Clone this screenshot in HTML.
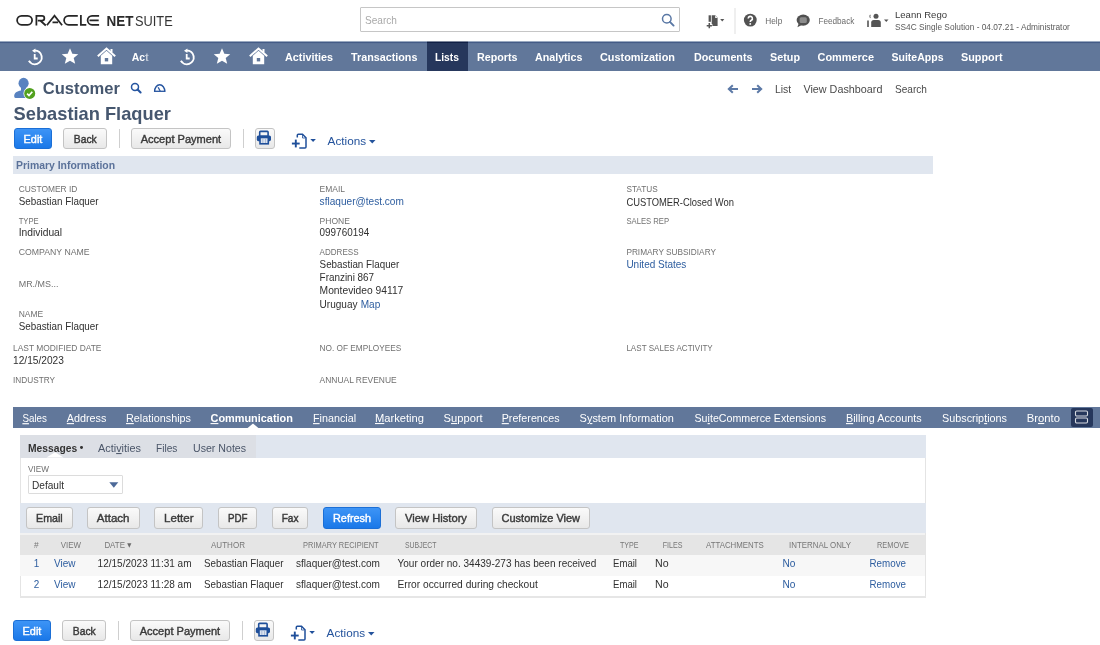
<!DOCTYPE html>
<html><head><meta charset="utf-8"><title>Customer - Sebastian Flaquer</title>
<style>
html,body{margin:0;padding:0;}
body{width:1100px;height:645px;overflow:hidden;position:relative;background:#fff;font-family:"Liberation Sans",sans-serif;}
#wrap{position:absolute;left:0;top:0;width:1100px;height:645px;filter:blur(0.4px);}
.t{position:absolute;white-space:nowrap;line-height:1;}
.b{position:absolute;box-sizing:border-box;}
.btn{position:absolute;box-sizing:border-box;border:1px solid #c4c4c4;border-radius:3px;background:linear-gradient(#fafafa,#e8e8e8);}
.btnb{position:absolute;box-sizing:border-box;border:1px solid #1b6fd6;border-radius:3px;background:linear-gradient(#3d94f6,#1a78e8);}
.sep{position:absolute;width:1px;background:#cfcfcf;}
svg{position:absolute;overflow:visible;}
u{text-decoration:underline;text-underline-offset:1px;text-decoration-thickness:1px;}
</style></head><body>
<div id="wrap"><!-- header -->
<svg style="left:14px;top:10px" width="90" height="20" viewBox="0 0 90 20"><g fill="none" stroke="#262626" stroke-width="1.75">
<path d="M7.7 5.8h5.9a4.5 4.5 0 0 1 0 9h-6a4.5 4.5 0 0 1 0-9z"/>
<path d="M22.4 15.5V5.8h5.6a2.35 2.35 0 0 1 0 4.7h-4.2M26.2 10.5l5.6 5"/>
<path d="M32.9 15.3L40.5 5.6l7.6 9.7M38.5 12.4h5.6"/>
<path d="M63.8 5.8h-9.2a4.5 4.5 0 0 0 0 9h9.2"/>
<path d="M66.9 5.1v9.7h5.4"/>
<path d="M85.1 5.8h-7a4.5 4.5 0 0 0 0 9h7M75.5 10.3h9.2"/>
</g></svg>
<div class="b" style="left:360px;top:7px;width:320px;height:25px;border:1px solid #c6c6c6;border-radius:1px;"></div>
<svg style="left:661px;top:13px" width="14" height="14" viewBox="0 0 14 14"><circle cx="5.8" cy="5.8" r="4.3" fill="none" stroke="#5a78a5" stroke-width="1.5"/><line x1="8.9" y1="8.9" x2="12.6" y2="12.6" stroke="#5a78a5" stroke-width="1.9" stroke-linecap="round"/></svg>
<!-- doc plus icon -->
<svg style="left:700px;top:8px" width="30" height="26" viewBox="0 0 30 26">
<rect x="8.6" y="7.3" width="2.3" height="6.5" fill="#555"/>
<path d="M11.7 7.3h3.5l2.4 2.4v8.3h-5.9z" fill="#555"/>
<path d="M15.2 7.6v2.3h2.3z" fill="#fff"/>
<path d="M9.3 14.6v6.2M6.2 17.7h6.2" stroke="#fff" stroke-width="3.2"/>
<path d="M9.3 15.1v5.2M6.7 17.7h5.2" stroke="#555" stroke-width="1.5"/>
<path d="M20.2 10.9h4.1l-2.05 2.6z" fill="#555"/>
</svg>
<div class="sep" style="left:734px;top:8px;height:26px;width:2px;background:#efefef"></div>
<svg style="left:743px;top:13px" width="15" height="15" viewBox="0 0 15 15"><circle cx="7.3" cy="7.1" r="6.4" fill="#525252"/><path d="M5.2 5.5a2.1 2.1 0 1 1 3.1 1.8c-0.8 0.45-1.05 0.8-1.05 1.7" fill="none" stroke="#fff" stroke-width="1.6"/><circle cx="7.25" cy="10.9" r="0.95" fill="#fff"/></svg>
<svg style="left:796px;top:14px" width="15" height="14" viewBox="0 0 15 14"><ellipse cx="7.2" cy="6.1" rx="6.6" ry="5.6" fill="#505050"/><path d="M2.6 9.8L1.4 13.2l4.4-2.2z" fill="#505050"/><rect x="3.6" y="3.3" width="7.2" height="5.6" rx="1.5" fill="#8c8c8c"/></svg>
<svg style="left:866px;top:13px" width="24" height="16" viewBox="0 0 24 16"><circle cx="10" cy="3.2" r="2.5" fill="#555"/><path d="M5.2 14v-4.4q0-2.6 2.6-2.6h4.4q2.6 0 2.6 2.6V14z" fill="#555"/><rect x="1" y="7.5" width="2" height="6.5" fill="#777"/><path d="M4.5 1.8a2 2 0 0 0 0 3" fill="none" stroke="#777" stroke-width="1.1"/><path d="M18 6.5h4.5l-2.25 2.6z" fill="#555"/></svg>
<!-- nav -->
<div class="b" style="left:0;top:41px;width:1100px;height:30px;background:linear-gradient(#9aa9c0 0,#9aa9c0 1px,#445b86 1px,#445b86 2px,#5a7096 2px,#61779a 3px);"></div>
<div class="b" style="left:427px;top:41px;width:41px;height:30px;background:linear-gradient(#7d879c 0,#7d879c 1px,#0f1f45 1px,#0f1f45 2px,#26375c 2px);"></div>
<!-- nav icons -->
<svg style="left:25.5px;top:49px" width="17" height="17" viewBox="0 0 17 17"><path d="M8.8 1.5A6.9 6.9 0 1 1 2.85 11.85" fill="none" stroke="#fff" stroke-width="1.9"/><path d="M6 1.7l3.4-2.3v4.6z" fill="#fff"/><path d="M8.7 4.9v4.6h3" fill="none" stroke="#fff" stroke-width="1.8"/></svg>
<svg style="left:61px;top:48px" width="18" height="17" viewBox="0 0 17 16"><path d="M8.5 0.3l2.2 5.1 5.6 0.4-4.3 3.6 1.4 5.5-4.9-3-4.9 3 1.4-5.5-4.3-3.6 5.6-0.4z" fill="#fff"/></svg>
<svg style="left:97px;top:47px" width="19" height="18" viewBox="0 0 19 18"><path d="M0.8 9.3L9.5 1.5l8.7 7.8" fill="none" stroke="#fff" stroke-width="2"/><path d="M3.8 8.8L9.5 3.8l5.7 5v8.4H3.8z" fill="#fff"/><rect x="7.8" y="11" width="3.4" height="3.4" fill="#61779a"/><rect x="13.5" y="2" width="2" height="3.5" fill="#fff"/></svg>
<svg style="left:177.5px;top:49px" width="17" height="17" viewBox="0 0 17 17"><path d="M8.8 1.5A6.9 6.9 0 1 1 2.85 11.85" fill="none" stroke="#fff" stroke-width="1.9"/><path d="M6 1.7l3.4-2.3v4.6z" fill="#fff"/><path d="M8.7 4.9v4.6h3" fill="none" stroke="#fff" stroke-width="1.8"/></svg>
<svg style="left:213px;top:48px" width="18" height="17" viewBox="0 0 17 16"><path d="M8.5 0.3l2.2 5.1 5.6 0.4-4.3 3.6 1.4 5.5-4.9-3-4.9 3 1.4-5.5-4.3-3.6 5.6-0.4z" fill="#fff"/></svg>
<svg style="left:249px;top:47px" width="19" height="18" viewBox="0 0 19 18"><path d="M0.8 9.3L9.5 1.5l8.7 7.8" fill="none" stroke="#fff" stroke-width="2"/><path d="M3.8 8.8L9.5 3.8l5.7 5v8.4H3.8z" fill="#fff"/><rect x="7.8" y="11" width="3.4" height="3.4" fill="#61779a"/><rect x="13.5" y="2" width="2" height="3.5" fill="#fff"/></svg>
<!-- title icons -->
<svg style="left:13px;top:77px" width="24" height="24" viewBox="0 0 24 24"><ellipse cx="10.6" cy="6.2" rx="5.1" ry="5.4" fill="#5882c0"/><path d="M8 10h5v4h-5z" fill="#5882c0"/><path d="M1.2 19.2C1.2 15.8 4 14.2 8 13.6h5.5c2.5 0.6 4.5 1.5 4.5 6v1.3H2.5q-1.3 0-1.3-1.7z" fill="#5882c0"/><circle cx="16.7" cy="16.4" r="6.2" fill="#fff"/><circle cx="16.7" cy="16.4" r="5.5" fill="#52a11f"/><path d="M14.1 16.6l1.9 1.9 3.3-3.7" fill="none" stroke="#fff" stroke-width="1.7"/></svg>
<svg style="left:130px;top:82px" width="12" height="12" viewBox="0 0 12 12"><circle cx="5" cy="4.9" r="3.5" fill="none" stroke="#2655a0" stroke-width="1.5"/><line x1="7.6" y1="7.5" x2="10.6" y2="10.5" stroke="#2655a0" stroke-width="2" stroke-linecap="round"/></svg>
<svg style="left:153px;top:83px" width="14" height="10" viewBox="0 0 14 10"><path d="M1.6 8.4A5.1 6.6 0 0 1 11.8 8.4" fill="none" stroke="#2655a0" stroke-width="1.4"/><line x1="1" y1="8.3" x2="12.4" y2="8.3" stroke="#2655a0" stroke-width="1.3"/><line x1="7.2" y1="8" x2="5.1" y2="4.3" stroke="#2655a0" stroke-width="1.3"/></svg>
<!-- nav arrows right -->
<svg style="left:727px;top:84px" width="12" height="10" viewBox="0 0 12 10"><path d="M11 5H2.5M5.8 1.2L1.8 5l4 3.8" fill="none" stroke="#5c79a6" stroke-width="2"/></svg>
<svg style="left:751px;top:84px" width="12" height="10" viewBox="0 0 12 10"><path d="M1 5h8.5M6.2 1.2l4 3.8-4 3.8" fill="none" stroke="#5c79a6" stroke-width="2"/></svg>
<!-- primary info -->
<div class="b" style="left:13px;top:156px;width:920px;height:18px;background:#e0e6ef;"></div>
<!-- tabs bar -->
<div class="b" style="left:13px;top:407px;width:1087px;height:21px;background:#61779a;"></div>
<svg style="left:246px;top:423px" width="14" height="6" viewBox="0 0 14 6"><path d="M1 5.5L7 0.5l6 5z" fill="#fff"/></svg>
<div class="b" style="left:1071px;top:408px;width:22px;height:19px;background:#26375c;border-radius:2px;"></div>
<svg style="left:1074px;top:410px" width="15" height="14" viewBox="0 0 15 14"><rect x="1.5" y="1" width="12" height="5" rx="1.2" fill="none" stroke="#d5d9e1" stroke-width="1.1"/><rect x="1.5" y="8" width="12" height="5" rx="1.2" fill="none" stroke="#d5d9e1" stroke-width="1.1"/></svg>
<!-- content panel -->
<div class="b" style="left:20px;top:435px;width:906px;height:163px;border:1px solid #e4e4e4;border-top:none;"></div>
<div class="b" style="left:20px;top:435px;width:906px;height:22.5px;background:#e0e6ef;"></div>
<div class="b" style="left:20px;top:435px;width:236px;height:22.5px;background:#dcdfe5;"></div>
<svg style="left:46px;top:452px" width="18" height="6" viewBox="0 0 18 6"><path d="M0.5 5.5L9 0.3l8.5 5.2z" fill="#fff"/></svg>
<div class="b" style="left:80.3px;top:445.8px;width:2.8px;height:2.8px;border-radius:50%;background:#333;"></div>
<!-- select -->
<div class="b" style="left:28px;top:475px;width:95px;height:19px;border:1px solid #dcdcdc;border-radius:1px;"></div>
<svg style="left:109px;top:481.5px" width="10" height="6" viewBox="0 0 10 6"><path d="M0.3 0.3h9l-4.5 5.4z" fill="#4d6a99"/></svg>
<!-- button bar -->
<div class="b" style="left:20px;top:503px;width:906px;height:30px;background:#e0e6ef;"></div>
<div class="btn" style="left:26px;top:507px;width:47px;height:22px;"></div>
<div class="btn" style="left:87px;top:507px;width:53px;height:22px;"></div>
<div class="btn" style="left:154px;top:507px;width:49px;height:22px;"></div>
<div class="btn" style="left:218px;top:507px;width:39px;height:22px;"></div>
<div class="btn" style="left:272px;top:507px;width:36px;height:22px;"></div>
<div class="btnb" style="left:323px;top:507px;width:58px;height:22px;"></div>
<div class="btn" style="left:395px;top:507px;width:82px;height:22px;"></div>
<div class="btn" style="left:492px;top:507px;width:98px;height:22px;"></div>
<!-- table -->
<div class="b" style="left:20px;top:533px;width:905px;height:1.5px;background:#f2f2f2;"></div>
<div class="b" style="left:20px;top:534.5px;width:905px;height:20px;background:#e5e5e5;"></div>
<div class="b" style="left:20px;top:554.5px;width:905px;height:21px;background:#f7f7f7;"></div>
<div class="b" style="left:20px;top:596px;width:906px;height:2px;background:#e6e6e6;"></div>
<svg style="left:127.2px;top:542.8px" width="5" height="5" viewBox="0 0 5 5"><path d="M0.2 0.3h4.2l-2.1 4.4z" fill="#6a6a6a"/></svg>
<div class="btnb" style="left:14px;top:128px;width:38px;height:21px;"></div>
<div class="btn" style="left:63px;top:128px;width:44px;height:21px;"></div>
<div class="sep" style="left:119px;top:129px;height:19px;"></div>
<div class="btn" style="left:131px;top:128px;width:100px;height:21px;"></div>
<div class="sep" style="left:243px;top:129px;height:19px;"></div>
<div class="btn" style="left:255px;top:128px;width:20px;height:21px;"></div>
<svg style="left:255px;top:129px" width="20" height="18" viewBox="0 0 20 18"><rect x="4.7" y="2.4" width="8.4" height="5" rx="0.8" fill="none" stroke="#1f4f9a" stroke-width="1.6"/><rect x="1.8" y="6.4" width="14.2" height="5.8" rx="1.6" fill="#1f4f9a"/><rect x="5" y="8.5" width="8.3" height="6.3" fill="#dbe3ef" stroke="#1f4f9a" stroke-width="1.6"/><path d="M7.8 9.5v4.5M10.5 9.5v4.5" stroke="#9fb2cf" stroke-width="0.8"/></svg>
<svg style="left:290px;top:133px" width="28" height="17" viewBox="0 0 28 17"><path d="M7.3 4.5V2.2q0-1 1-1h4.2l3.5 3.5v9.3q0 1-1 1H9.3" fill="none" stroke="#1f4f9a" stroke-width="1.5"/><path d="M12.5 2v3h2.8" fill="none" stroke="#1f4f9a" stroke-width="0.8"/><rect x="1.9" y="9.6" width="7.8" height="1.9" fill="#1f4f9a"/><rect x="4.85" y="6.6" width="1.9" height="7.8" fill="#1f4f9a"/><path d="M20.3 6h5.6l-2.8 3z" fill="#1f4f9a"/></svg>
<svg style="left:369px;top:140px" width="7" height="4" viewBox="0 0 7 4"><path d="M0 0h6.5l-3.25 3.5z" fill="#24539c"/></svg><div class="btnb" style="left:13px;top:620px;width:38px;height:21px;"></div>
<div class="btn" style="left:62px;top:620px;width:44px;height:21px;"></div>
<div class="sep" style="left:118px;top:621px;height:19px;"></div>
<div class="btn" style="left:130px;top:620px;width:100px;height:21px;"></div>
<div class="sep" style="left:242px;top:621px;height:19px;"></div>
<div class="btn" style="left:254px;top:620px;width:20px;height:21px;"></div>
<svg style="left:254px;top:621px" width="20" height="18" viewBox="0 0 20 18"><rect x="4.7" y="2.4" width="8.4" height="5" rx="0.8" fill="none" stroke="#1f4f9a" stroke-width="1.6"/><rect x="1.8" y="6.4" width="14.2" height="5.8" rx="1.6" fill="#1f4f9a"/><rect x="5" y="8.5" width="8.3" height="6.3" fill="#dbe3ef" stroke="#1f4f9a" stroke-width="1.6"/><path d="M7.8 9.5v4.5M10.5 9.5v4.5" stroke="#9fb2cf" stroke-width="0.8"/></svg>
<svg style="left:289px;top:625px" width="28" height="17" viewBox="0 0 28 17"><path d="M7.3 4.5V2.2q0-1 1-1h4.2l3.5 3.5v9.3q0 1-1 1H9.3" fill="none" stroke="#1f4f9a" stroke-width="1.5"/><path d="M12.5 2v3h2.8" fill="none" stroke="#1f4f9a" stroke-width="0.8"/><rect x="1.9" y="9.6" width="7.8" height="1.9" fill="#1f4f9a"/><rect x="4.85" y="6.6" width="1.9" height="7.8" fill="#1f4f9a"/><path d="M20.3 6h5.6l-2.8 3z" fill="#1f4f9a"/></svg>
<svg style="left:368px;top:632px" width="7" height="4" viewBox="0 0 7 4"><path d="M0 0h6.5l-3.25 3.5z" fill="#24539c"/></svg><div class="t" style="left:106.50px;top:14.52px;font-size:13.50px;font-weight:700;color:#2b2b2b;transform:scaleY(1.033);transform-origin:0 11.43px;">NET</div>
<div class="t" style="left:135.00px;top:15.58px;font-size:12.80px;font-weight:400;color:#333333;transform:scaleY(1.090);transform-origin:0 10.84px;">SUITE</div>
<div class="t" style="left:365.00px;top:15.96px;font-size:10.10px;font-weight:400;color:#a9a9a9;transform:scaleY(1.105);transform-origin:0 8.55px;">Search</div>
<div class="t" style="left:765.30px;top:18.36px;font-size:8.27px;font-weight:400;color:#6a6a6a;transform:scaleY(1.147);transform-origin:0 7.00px;">Help</div>
<div class="t" style="left:818.40px;top:18.35px;font-size:8.20px;font-weight:400;color:#6a6a6a;transform:scaleY(1.157);transform-origin:0 6.94px;">Feedback</div>
<div class="t" style="left:895.00px;top:10.00px;font-size:9.56px;font-weight:400;color:#3a3a3a;transform:scaleY(1.022);transform-origin:0 8.09px;">Leann Rego</div>
<div class="t" style="left:895.00px;top:22.60px;font-size:8.31px;font-weight:400;color:#5a5a5a;transform:scaleY(1.008);transform-origin:0 7.03px;">SS4C Single Solution - 04.07.21 - Administrator</div>
<div class="t" style="left:131.75px;top:52.82px;font-size:10.47px;font-weight:700;color:#ffffff;transform:scaleY(1.067);transform-origin:0 8.86px;-webkit-mask-image:linear-gradient(to right,#000 0,#000 12px,rgba(0,0,0,0.25) 18px);">Act</div>
<div class="t" style="left:285.00px;top:51.76px;font-size:10.80px;font-weight:700;color:#ffffff;transform:scaleY(1.034);transform-origin:0 9.14px;">Activities</div>
<div class="t" style="left:351.00px;top:51.77px;font-size:10.78px;font-weight:700;color:#ffffff;transform:scaleY(1.035);transform-origin:0 9.13px;">Transactions</div>
<div class="t" style="left:435.00px;top:52.81px;font-size:10.28px;font-weight:700;color:#ffffff;transform:scaleY(1.086);transform-origin:0 8.70px;">Lists</div>
<div class="t" style="left:477.00px;top:51.76px;font-size:10.72px;font-weight:700;color:#ffffff;transform:scaleY(1.041);transform-origin:0 9.07px;">Reports</div>
<div class="t" style="left:535.00px;top:51.76px;font-size:10.68px;font-weight:700;color:#ffffff;transform:scaleY(1.045);transform-origin:0 9.04px;">Analytics</div>
<div class="t" style="left:600.00px;top:51.77px;font-size:10.89px;font-weight:700;color:#ffffff;transform:scaleY(1.025);transform-origin:0 9.22px;">Customization</div>
<div class="t" style="left:694.00px;top:51.75px;font-size:10.74px;font-weight:700;color:#ffffff;transform:scaleY(1.039);transform-origin:0 9.09px;">Documents</div>
<div class="t" style="left:770.00px;top:51.75px;font-size:10.80px;font-weight:700;color:#ffffff;transform:scaleY(1.034);transform-origin:0 9.14px;">Setup</div>
<div class="t" style="left:817.50px;top:51.75px;font-size:10.93px;font-weight:700;color:#ffffff;transform:scaleY(1.021);transform-origin:0 9.25px;">Commerce</div>
<div class="t" style="left:891.50px;top:51.75px;font-size:10.52px;font-weight:700;color:#ffffff;transform:scaleY(1.061);transform-origin:0 8.90px;">SuiteApps</div>
<div class="t" style="left:961.00px;top:51.76px;font-size:10.83px;font-weight:700;color:#ffffff;transform:scaleY(1.031);transform-origin:0 9.17px;">Support</div>
<div class="t" style="left:42.70px;top:80.51px;font-size:16.56px;font-weight:700;color:#46576f;">Customer</div>
<div class="t" style="left:13.60px;top:105.01px;font-size:18.28px;font-weight:700;color:#46576f;">Sebastian Flaquer</div>
<div class="t" style="left:775.00px;top:84.77px;font-size:10.41px;font-weight:400;color:#4a4a4a;transform:scaleY(1.072);transform-origin:0 8.81px;">List</div>
<div class="t" style="left:803.40px;top:83.72px;font-size:10.80px;font-weight:400;color:#4a4a4a;transform:scaleY(1.034);transform-origin:0 9.14px;">View Dashboard</div>
<div class="t" style="left:895.00px;top:84.77px;font-size:10.10px;font-weight:400;color:#4a4a4a;transform:scaleY(1.105);transform-origin:0 8.55px;">Search</div>
<div class="t" style="left:23.60px;top:133.91px;font-size:10.91px;font-weight:400;color:#ffffff;-webkit-text-stroke:0.4px currentColor;">Edit</div>
<div class="t" style="left:73.80px;top:134.95px;font-size:10.35px;font-weight:400;color:#3a3a3a;transform:scaleY(1.051);transform-origin:0 8.76px;-webkit-text-stroke:0.4px currentColor;">Back</div>
<div class="t" style="left:140.70px;top:133.92px;font-size:11.06px;font-weight:400;color:#3a3a3a;-webkit-text-stroke:0.4px currentColor;">Accept Payment</div>
<div class="t" style="left:327.60px;top:135.41px;font-size:11.72px;font-weight:400;color:#24539c;">Actions</div>
<div class="t" style="left:22.60px;top:625.91px;font-size:10.91px;font-weight:400;color:#ffffff;-webkit-text-stroke:0.4px currentColor;">Edit</div>
<div class="t" style="left:72.80px;top:626.95px;font-size:10.35px;font-weight:400;color:#3a3a3a;transform:scaleY(1.051);transform-origin:0 8.76px;-webkit-text-stroke:0.4px currentColor;">Back</div>
<div class="t" style="left:139.70px;top:625.92px;font-size:11.06px;font-weight:400;color:#3a3a3a;-webkit-text-stroke:0.4px currentColor;">Accept Payment</div>
<div class="t" style="left:326.60px;top:627.41px;font-size:11.72px;font-weight:400;color:#24539c;">Actions</div>
<div class="t" style="left:16.00px;top:160.75px;font-size:10.43px;font-weight:700;color:#5b729a;transform:scaleY(1.044);transform-origin:0 8.83px;">Primary Information</div>
<div class="t" style="left:18.70px;top:184.83px;font-size:8.41px;font-weight:400;color:#707070;transform:scaleY(1.162);transform-origin:0 7.12px;">CUSTOMER ID</div>
<div class="t" style="left:18.70px;top:196.94px;font-size:9.86px;font-weight:400;color:#303030;transform:scaleY(1.076);transform-origin:0 8.34px;">Sebastian Flaquer</div>
<div class="t" style="left:18.70px;top:217.69px;font-size:7.67px;font-weight:400;color:#707070;transform:scaleY(1.180);transform-origin:0 6.49px;">TYPE</div>
<div class="t" style="left:18.70px;top:228.42px;font-size:10.29px;font-weight:400;color:#303030;transform:scaleY(1.030);transform-origin:0 8.71px;">Individual</div>
<div class="t" style="left:18.70px;top:247.75px;font-size:8.72px;font-weight:400;color:#707070;transform:scaleY(1.120);transform-origin:0 7.38px;">COMPANY NAME</div>
<div class="t" style="left:18.70px;top:279.66px;font-size:8.95px;font-weight:400;color:#707070;transform:scaleY(1.092);transform-origin:0 7.57px;">MR./MS...</div>
<div class="t" style="left:18.70px;top:310.04px;font-size:8.50px;font-weight:400;color:#707070;transform:scaleY(1.150);transform-origin:0 7.19px;">NAME</div>
<div class="t" style="left:18.70px;top:321.63px;font-size:9.86px;font-weight:400;color:#303030;transform:scaleY(1.076);transform-origin:0 8.34px;">Sebastian Flaquer</div>
<div class="t" style="left:13.00px;top:344.04px;font-size:8.42px;font-weight:400;color:#707070;transform:scaleY(1.160);transform-origin:0 7.13px;">LAST MODIFIED DATE</div>
<div class="t" style="left:13.00px;top:356.03px;font-size:10.19px;font-weight:400;color:#303030;transform:scaleY(1.041);transform-origin:0 8.62px;">12/15/2023</div>
<div class="t" style="left:13.00px;top:377.19px;font-size:8.26px;font-weight:400;color:#707070;transform:scaleY(1.180);transform-origin:0 6.99px;">INDUSTRY</div>
<div class="t" style="left:319.60px;top:185.04px;font-size:8.48px;font-weight:400;color:#707070;transform:scaleY(1.152);transform-origin:0 7.18px;">EMAIL</div>
<div class="t" style="left:319.60px;top:196.73px;font-size:10.10px;font-weight:400;color:#2d5d9f;transform:scaleY(1.049);transform-origin:0 8.55px;">sflaquer@test.com</div>
<div class="t" style="left:319.60px;top:216.83px;font-size:8.53px;font-weight:400;color:#707070;transform:scaleY(1.145);transform-origin:0 7.22px;">PHONE</div>
<div class="t" style="left:319.60px;top:228.03px;font-size:9.91px;font-weight:400;color:#303030;transform:scaleY(1.070);transform-origin:0 8.39px;">099760194</div>
<div class="t" style="left:319.60px;top:248.96px;font-size:8.06px;font-weight:400;color:#707070;transform:scaleY(1.180);transform-origin:0 6.82px;">ADDRESS</div>
<div class="t" style="left:319.60px;top:259.64px;font-size:9.83px;font-weight:400;color:#303030;transform:scaleY(1.079);transform-origin:0 8.32px;">Sebastian Flaquer</div>
<div class="t" style="left:319.60px;top:272.64px;font-size:9.92px;font-weight:400;color:#303030;transform:scaleY(1.069);transform-origin:0 8.40px;">Franzini 867</div>
<div class="t" style="left:319.60px;top:286.03px;font-size:10.28px;font-weight:400;color:#303030;transform:scaleY(1.032);transform-origin:0 8.70px;">Montevideo 94117</div>
<div class="t" style="left:319.60px;top:299.64px;font-size:10.05px;font-weight:400;color:#303030;transform:scaleY(1.055);transform-origin:0 8.51px;">Uruguay</div>
<div class="t" style="left:360.70px;top:299.62px;font-size:10.07px;font-weight:400;color:#2d5d9f;transform:scaleY(1.053);transform-origin:0 8.52px;">Map</div>
<div class="t" style="left:319.60px;top:345.18px;font-size:8.28px;font-weight:400;color:#707070;transform:scaleY(1.179);transform-origin:0 7.01px;">NO. OF EMPLOYEES</div>
<div class="t" style="left:319.60px;top:376.03px;font-size:8.45px;font-weight:400;color:#707070;transform:scaleY(1.156);transform-origin:0 7.15px;">ANNUAL REVENUE</div>
<div class="t" style="left:626.40px;top:185.99px;font-size:8.26px;font-weight:400;color:#707070;transform:scaleY(1.180);transform-origin:0 6.99px;">STATUS</div>
<div class="t" style="left:626.40px;top:197.50px;font-size:9.39px;font-weight:400;color:#303030;transform:scaleY(1.129);transform-origin:0 7.95px;">CUSTOMER-Closed Won</div>
<div class="t" style="left:626.40px;top:217.70px;font-size:7.70px;font-weight:400;color:#707070;transform:scaleY(1.180);transform-origin:0 6.51px;">SALES REP</div>
<div class="t" style="left:626.40px;top:249.18px;font-size:8.27px;font-weight:400;color:#707070;transform:scaleY(1.180);transform-origin:0 7.00px;">PRIMARY SUBSIDIARY</div>
<div class="t" style="left:626.40px;top:259.73px;font-size:9.99px;font-weight:400;color:#2d5d9f;transform:scaleY(1.061);transform-origin:0 8.46px;">United States</div>
<div class="t" style="left:626.40px;top:344.66px;font-size:8.07px;font-weight:400;color:#707070;transform:scaleY(1.180);transform-origin:0 6.83px;">LAST SALES ACTIVITY</div>
<div class="t" style="left:22.40px;top:414.45px;font-size:9.80px;font-weight:400;color:#ffffff;transform:scaleY(1.180);transform-origin:0 8.29px;"><u>S</u>ales</div>
<div class="t" style="left:66.80px;top:413.42px;font-size:10.80px;font-weight:400;color:#ffffff;transform:scaleY(1.086);transform-origin:0 9.14px;"><u>A</u>ddress</div>
<div class="t" style="left:126.00px;top:413.43px;font-size:10.83px;font-weight:400;color:#ffffff;transform:scaleY(1.082);transform-origin:0 9.17px;"><u>R</u>elationships</div>
<div class="t" style="left:313.00px;top:413.42px;font-size:10.75px;font-weight:400;color:#ffffff;transform:scaleY(1.091);transform-origin:0 9.10px;"><u>F</u>inancial</div>
<div class="t" style="left:375.00px;top:413.44px;font-size:11.16px;font-weight:400;color:#ffffff;transform:scaleY(1.050);transform-origin:0 9.45px;"><u>M</u>arketing</div>
<div class="t" style="left:443.60px;top:413.44px;font-size:11.16px;font-weight:400;color:#ffffff;transform:scaleY(1.050);transform-origin:0 9.45px;">S<u>u</u>pport</div>
<div class="t" style="left:501.70px;top:413.42px;font-size:10.73px;font-weight:400;color:#ffffff;transform:scaleY(1.093);transform-origin:0 9.08px;"><u>P</u>references</div>
<div class="t" style="left:579.60px;top:413.43px;font-size:10.96px;font-weight:400;color:#ffffff;transform:scaleY(1.069);transform-origin:0 9.28px;">S<u>y</u>stem Information</div>
<div class="t" style="left:694.50px;top:413.40px;font-size:10.66px;font-weight:400;color:#ffffff;transform:scaleY(1.099);transform-origin:0 9.02px;">Su<u>i</u>teCommerce Extensions</div>
<div class="t" style="left:846.00px;top:413.41px;font-size:10.81px;font-weight:400;color:#ffffff;transform:scaleY(1.084);transform-origin:0 9.15px;"><u>B</u>illing Accounts</div>
<div class="t" style="left:942.00px;top:413.43px;font-size:10.83px;font-weight:400;color:#ffffff;transform:scaleY(1.082);transform-origin:0 9.17px;">Subscrip<u>t</u>ions</div>
<div class="t" style="left:1026.70px;top:413.42px;font-size:11.30px;font-weight:400;color:#ffffff;transform:scaleY(1.037);transform-origin:0 9.57px;">Br<u>o</u>nto</div>
<div class="t" style="left:210.50px;top:413.43px;font-size:10.92px;font-weight:700;color:#ffffff;transform:scaleY(1.073);transform-origin:0 9.25px;"><u>C</u>ommunication</div>
<div class="t" style="left:28.00px;top:443.85px;font-size:10.30px;font-weight:700;color:#333333;transform:scaleY(1.057);transform-origin:0 8.72px;">Messages</div>
<div class="t" style="left:98.00px;top:442.82px;font-size:10.90px;font-weight:400;color:#4a5568;transform:scaleY(1.049);transform-origin:0 9.23px;">Acti<u>v</u>ities</div>
<div class="t" style="left:156.00px;top:443.88px;font-size:10.10px;font-weight:400;color:#4a5568;transform:scaleY(1.133);transform-origin:0 8.55px;">Files</div>
<div class="t" style="left:193.00px;top:442.81px;font-size:10.61px;font-weight:400;color:#4a5568;transform:scaleY(1.079);transform-origin:0 8.98px;">User Notes</div>
<div class="t" style="left:28.00px;top:465.52px;font-size:8.21px;font-weight:400;color:#707070;transform:scaleY(1.019);transform-origin:0 6.95px;">VIEW</div>
<div class="t" style="left:32.00px;top:480.63px;font-size:10.10px;font-weight:400;color:#303030;transform:scaleY(1.050);transform-origin:0 8.55px;">Default</div>
<div class="t" style="left:36.00px;top:513.31px;font-size:10.69px;font-weight:400;color:#3a3a3a;transform:scaleY(1.019);transform-origin:0 9.05px;-webkit-text-stroke:0.4px currentColor;">Email</div>
<div class="t" style="left:96.80px;top:513.32px;font-size:11.54px;font-weight:400;color:#3a3a3a;-webkit-text-stroke:0.4px currentColor;">Attach</div>
<div class="t" style="left:164.00px;top:513.31px;font-size:11.58px;font-weight:400;color:#3a3a3a;-webkit-text-stroke:0.4px currentColor;">Letter</div>
<div class="t" style="left:228.00px;top:514.34px;font-size:9.80px;font-weight:400;color:#3a3a3a;transform:scaleY(1.110);transform-origin:0 8.30px;-webkit-text-stroke:0.4px currentColor;">PDF</div>
<div class="t" style="left:281.70px;top:514.35px;font-size:10.14px;font-weight:400;color:#3a3a3a;transform:scaleY(1.073);transform-origin:0 8.59px;-webkit-text-stroke:0.4px currentColor;">Fax</div>
<div class="t" style="left:405.00px;top:513.31px;font-size:11.20px;font-weight:400;color:#3a3a3a;-webkit-text-stroke:0.4px currentColor;">View History</div>
<div class="t" style="left:501.60px;top:513.31px;font-size:10.97px;font-weight:400;color:#3a3a3a;-webkit-text-stroke:0.4px currentColor;">Customize View</div>
<div class="t" style="left:333.00px;top:513.30px;font-size:10.86px;font-weight:400;color:#ffffff;-webkit-text-stroke:0.4px currentColor;">Refresh</div>
<div class="t" style="left:34.00px;top:541.42px;font-size:8.37px;font-weight:400;color:#777777;transform:scaleY(1.067);transform-origin:0 7.09px;">#</div>
<div class="t" style="left:60.80px;top:542.49px;font-size:7.91px;font-weight:400;color:#777777;transform:scaleY(1.129);transform-origin:0 6.69px;">VIEW</div>
<div class="t" style="left:104.40px;top:541.51px;font-size:7.95px;font-weight:400;color:#777777;transform:scaleY(1.124);transform-origin:0 6.73px;">DATE</div>
<div class="t" style="left:211.00px;top:542.49px;font-size:8.05px;font-weight:400;color:#777777;transform:scaleY(1.109);transform-origin:0 6.82px;">AUTHOR</div>
<div class="t" style="left:303.00px;top:542.46px;font-size:7.47px;font-weight:400;color:#777777;transform:scaleY(1.180);transform-origin:0 6.32px;">PRIMARY RECIPIENT</div>
<div class="t" style="left:405.00px;top:542.57px;font-size:6.92px;font-weight:400;color:#777777;transform:scaleY(1.180);transform-origin:0 5.86px;">SUBJECT</div>
<div class="t" style="left:620.00px;top:542.60px;font-size:7.12px;font-weight:400;color:#777777;transform:scaleY(1.180);transform-origin:0 6.03px;">TYPE</div>
<div class="t" style="left:662.70px;top:542.59px;font-size:7.13px;font-weight:400;color:#777777;transform:scaleY(1.180);transform-origin:0 6.03px;">FILES</div>
<div class="t" style="left:706.00px;top:541.50px;font-size:7.87px;font-weight:400;color:#777777;transform:scaleY(1.135);transform-origin:0 6.66px;">ATTACHMENTS</div>
<div class="t" style="left:789.00px;top:541.50px;font-size:7.92px;font-weight:400;color:#777777;transform:scaleY(1.128);transform-origin:0 6.70px;">INTERNAL ONLY</div>
<div class="t" style="left:877.00px;top:542.45px;font-size:7.39px;font-weight:400;color:#777777;transform:scaleY(1.180);transform-origin:0 6.25px;">REMOVE</div>
<div class="t" style="left:33.80px;top:558.84px;font-size:9.94px;font-weight:400;color:#2d5d9f;transform:scaleY(1.067);transform-origin:0 8.42px;">1</div>
<div class="t" style="left:54.00px;top:558.83px;font-size:10.00px;font-weight:400;color:#2d5d9f;transform:scaleY(1.060);transform-origin:0 8.47px;">View</div>
<div class="t" style="left:97.60px;top:558.83px;font-size:10.02px;font-weight:400;color:#303030;transform:scaleY(1.058);transform-origin:0 8.48px;">12/15/2023 11:31 am</div>
<div class="t" style="left:204.00px;top:558.82px;font-size:9.81px;font-weight:400;color:#303030;transform:scaleY(1.081);transform-origin:0 8.30px;">Sebastian Flaquer</div>
<div class="t" style="left:296.00px;top:558.83px;font-size:10.06px;font-weight:400;color:#303030;transform:scaleY(1.054);transform-origin:0 8.51px;">sflaquer@test.com</div>
<div class="t" style="left:397.50px;top:558.83px;font-size:10.04px;font-weight:400;color:#303030;transform:scaleY(1.056);transform-origin:0 8.50px;">Your order no. 34439-273 has been received</div>
<div class="t" style="left:613.00px;top:558.82px;font-size:9.60px;font-weight:400;color:#303030;transform:scaleY(1.105);transform-origin:0 8.12px;">Email</div>
<div class="t" style="left:655.00px;top:557.80px;font-size:10.64px;font-weight:400;color:#303030;">No</div>
<div class="t" style="left:782.40px;top:558.83px;font-size:10.17px;font-weight:400;color:#2d5d9f;transform:scaleY(1.043);transform-origin:0 8.61px;">No</div>
<div class="t" style="left:869.50px;top:558.83px;font-size:9.80px;font-weight:400;color:#2d5d9f;transform:scaleY(1.082);transform-origin:0 8.30px;">Remove</div>
<div class="t" style="left:33.80px;top:579.75px;font-size:9.94px;font-weight:400;color:#2d5d9f;transform:scaleY(1.067);transform-origin:0 8.42px;">2</div>
<div class="t" style="left:54.00px;top:579.74px;font-size:10.00px;font-weight:400;color:#2d5d9f;transform:scaleY(1.060);transform-origin:0 8.47px;">View</div>
<div class="t" style="left:97.60px;top:579.73px;font-size:10.02px;font-weight:400;color:#303030;transform:scaleY(1.058);transform-origin:0 8.48px;">12/15/2023 11:28 am</div>
<div class="t" style="left:204.00px;top:579.73px;font-size:9.81px;font-weight:400;color:#303030;transform:scaleY(1.081);transform-origin:0 8.30px;">Sebastian Flaquer</div>
<div class="t" style="left:296.00px;top:579.73px;font-size:10.06px;font-weight:400;color:#303030;transform:scaleY(1.054);transform-origin:0 8.51px;">sflaquer@test.com</div>
<div class="t" style="left:397.50px;top:579.73px;font-size:10.23px;font-weight:400;color:#303030;transform:scaleY(1.036);transform-origin:0 8.66px;">Error occurred during checkout</div>
<div class="t" style="left:613.00px;top:579.71px;font-size:9.60px;font-weight:400;color:#303030;transform:scaleY(1.105);transform-origin:0 8.12px;">Email</div>
<div class="t" style="left:655.00px;top:578.71px;font-size:10.64px;font-weight:400;color:#303030;">No</div>
<div class="t" style="left:782.40px;top:579.74px;font-size:10.17px;font-weight:400;color:#2d5d9f;transform:scaleY(1.043);transform-origin:0 8.61px;">No</div>
<div class="t" style="left:869.50px;top:579.74px;font-size:9.80px;font-weight:400;color:#2d5d9f;transform:scaleY(1.082);transform-origin:0 8.30px;">Remove</div>
</div></body></html>
